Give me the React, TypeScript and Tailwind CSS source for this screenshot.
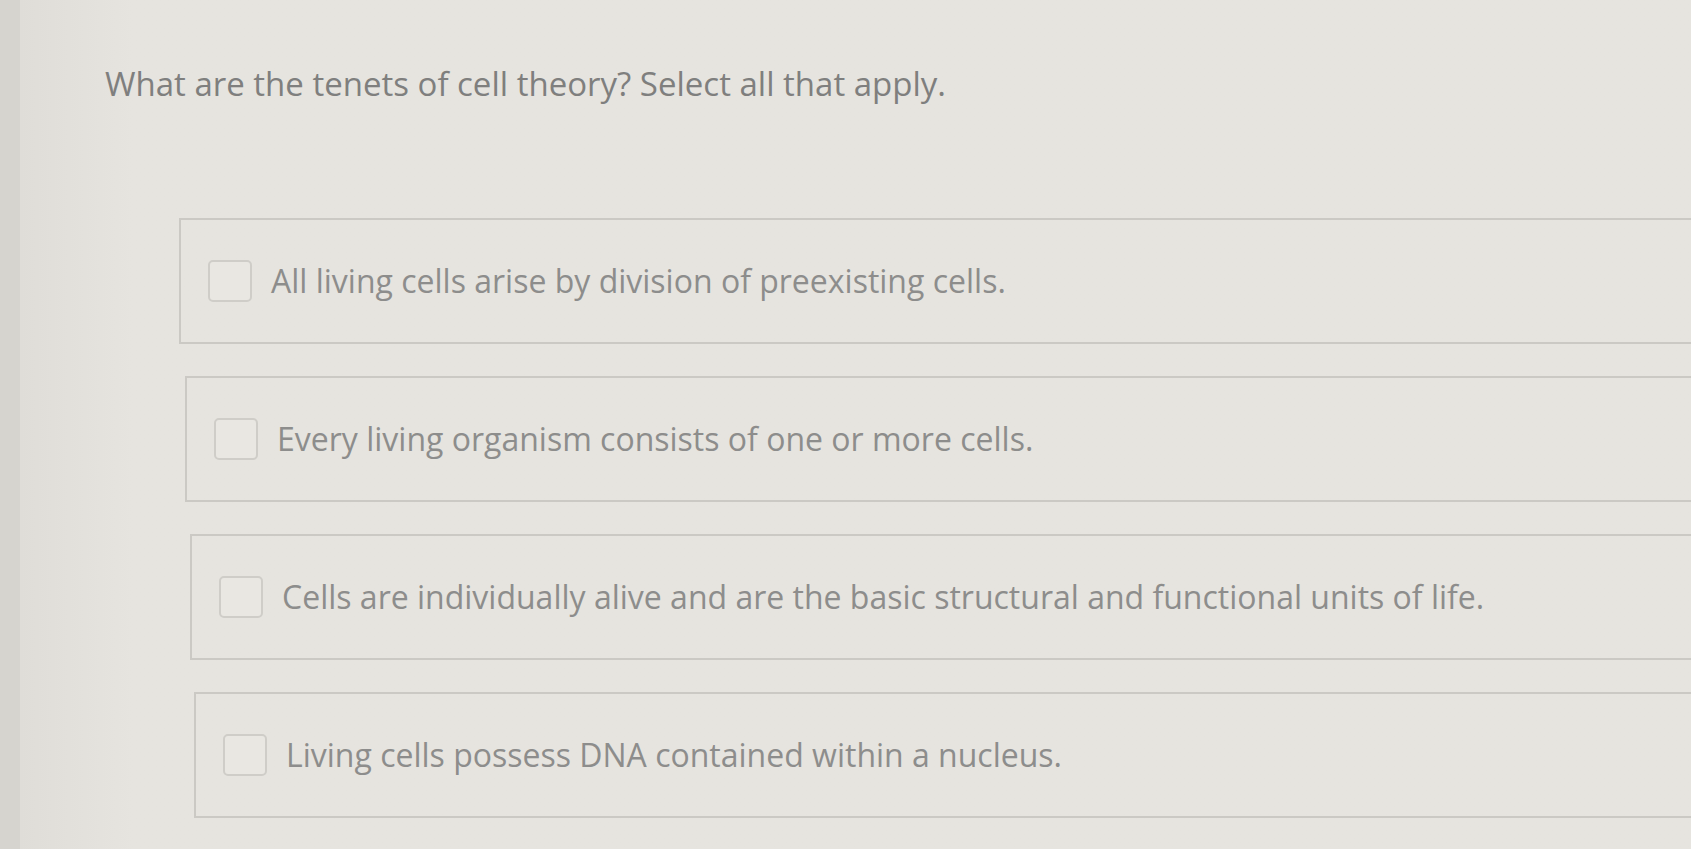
const options = [
    { text: "All living cells arise by division of preexisting cells.", shift: "ml-0" },
    { text: "Every living organism consists of one or more cells.", shift: "ml-[6px]" },
    { text: "Cells are individually alive and are the basic structural and functional units of life.", shift: "ml-[11px]" },
    { text: "Living cells possess DNA contained within a nucleus.", shift: "ml-[15px]" },
];

function Option({ text, shift }: { text: string; shift: string }) {
    return (
        <label className={`${shift} flex items-center h-[126px] w-[1700px] border-2 border-[#cbc9c4] pl-[27px] gap-[19px] cursor-pointer`}>
            <span className="w-[44px] h-[42px] shrink-0 rounded-[5px] border-2 border-[#cfcdc8] bg-[#e9e7e2]" />
            <span className="text-[32px] leading-[40px] text-[#8d8d8c]">{text}</span>
        </label>
    );
}

export default function App() {
    return (
        <div
            className="w-[1691px] h-[849px] overflow-hidden bg-[#e4e2dd] flex"
            style={{ fontFamily: '"Open Sans", "Liberation Sans", sans-serif' }}
        >
            <div className="w-[20px] shrink-0 bg-[#d6d4cf]" />
            <div className="flex-1 bg-gradient-to-r from-[#dfddd8] to-[#e6e4df] to-[6%]">
                <h1 className="ml-[85px] mt-[62px] text-[33px] text-[#7f7f7e] leading-[44px]">
                    What are the tenets of cell theory? Select all that apply.
                </h1>

                <div className="ml-[159px] mt-[112px] flex flex-col gap-[32px]">
                    {options.map((o) => (
                        <Option key={o.text} text={o.text} shift={o.shift} />
                    ))}
                </div>
            </div>
        </div>
    );
}
